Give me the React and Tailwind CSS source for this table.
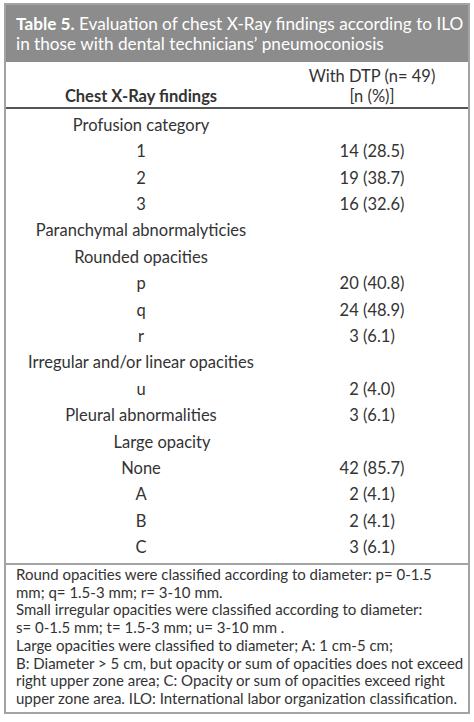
import React from "react";

const rows = [
  ["Profusion category", ""],
  ["1", "14 (28.5)"],
  ["2", "19 (38.7)"],
  ["3", "16 (32.6)"],
  ["Paranchymal abnormalyticies", ""],
  ["Rounded opacities", ""],
  ["p", "20 (40.8)"],
  ["q", "24 (48.9)"],
  ["r", "3 (6.1)"],
  ["Irregular and/or linear opacities", ""],
  ["u", "2 (4.0)"],
  ["Pleural abnormalities", "3 (6.1)"],
  ["Large opacity", "", true],
  ["None", "42 (85.7)"],
  ["A", "2 (4.1)"],
  ["B", "2 (4.1)"],
  ["C", "3 (6.1)"],
];

const foot = [
  "Round opacities were classified according to diameter: p= 0-1.5",
  "mm; q= 1.5-3 mm; r= 3-10 mm.",
  "Small irregular opacities were classified according to diameter:",
  "s= 0-1.5 mm; t= 1.5-3 mm; u= 3-10 mm .",
  "Large opacities were classified to diameter; A: 1 cm-5 cm;",
  "B: Diameter > 5 cm, but opacity or sum of opacities does not exceed",
  "right upper zone area; C: Opacity or sum of opacities exceed right",
  "upper zone area. ILO: International labor organization classification.",
];

export default function App() {
  return (
    <div className="w-[474px] h-[722px] bg-white pt-[3px] pl-[4px]" style={{ fontFamily: "Lato, 'Open Sans', sans-serif" }}>
      <div className="w-[466px] h-[711px] border-2 border-[#a3a3a3] flex flex-col text-[#333] overflow-hidden">
        <div className="shrink-0 bg-[#8c8c8c] text-white text-[17.2px] leading-[20.3px] px-[10px] pt-[9px] h-[57px] whitespace-nowrap">
          <div><span className="font-bold">Table 5.</span> Evaluation of chest X-Ray findings according to ILO</div>
          <div>in those with dental technicians’ pneumoconiosis</div>
        </div>
        <div className="shrink-0 flex h-[47px] border-b-2 border-[#555] text-[16.5px] leading-[20px] pb-[1px]">
          <div className="w-[270px] flex items-end justify-center font-bold">Chest X-Ray findings</div>
          <div className="flex-1 flex flex-col items-center justify-end">
            <div>With DTP (n= 49)</div>
            <div>[n (%)]</div>
          </div>
        </div>
        <div className="shrink-0 flex flex-col pt-[3px] h-[454px] text-[16.5px]">
          {rows.map(([a, b, shift], i) => (
            <div key={i} className="shrink-0 flex h-[26.4px] items-center">
              <div className={"w-[270px] text-center " + (shift ? "pl-[42px]" : "")}>{a}</div>
              <div className="flex-1 text-center">{b}</div>
            </div>
          ))}
        </div>
        <div className="shrink-0 border-t-2 border-[#a3a3a3] px-[10px] pt-[1px] text-[15px] leading-[17.7px] whitespace-nowrap">
          {foot.map((l, i) => (
            <div key={i}>{l}</div>
          ))}
        </div>
      </div>
    </div>
  );
}
